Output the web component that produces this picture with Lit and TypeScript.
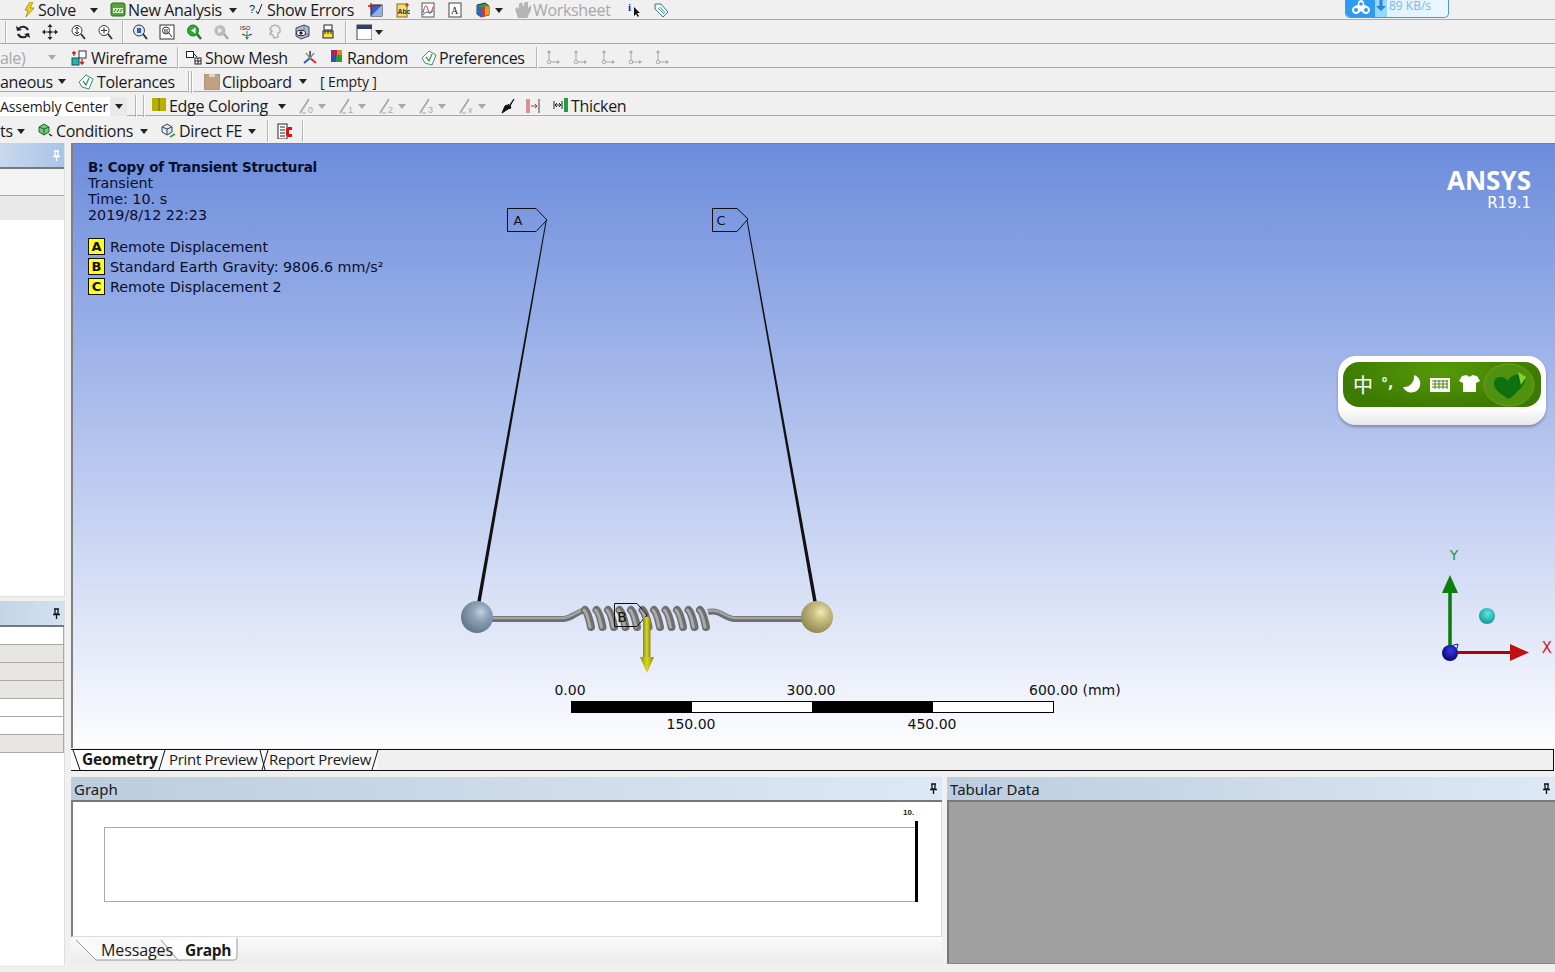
import { LitElement, html, css, svg } from "lit";
import { customElement } from "lit/decorators.js";

type Item = { x: number; icon?: string; text?: string; gray?: boolean; arrow?: boolean; sep?: boolean; small?: boolean; white?: boolean; btn?: boolean };

const G = "#a8a8a8";
const edgeIcon = (d: string) => svg`<path d="M1 15 10 1" stroke="${G}" stroke-width="1.800"/><path d="M3 15h4" stroke="${G}"/><text x="9" y="15" font-size="9" font-family="Liberation Sans" fill="${G}">${d}</text>`;
const icons: Record<string, unknown> = {
  bolt: svg`<path d="M8 0 3 8h3L4 15l8-9H8l3-6z" fill="#f4d50c" stroke="#8a7a10" stroke-width=".7"/>`,
  calc: svg`<rect x="1" y="1" width="14" height="13" rx="2" fill="#55a63a" stroke="#2b6a1c"/><rect x="3" y="6" width="10" height="5" fill="#d8efc8"/><path d="M4 10l2-3M7 10l2-3M10 10l2-3" stroke="#2b6a1c"/>`,
  err: svg`<text x="0" y="11" font-size="11" font-family="Liberation Sans" fill="#222">?</text><path d="M7 9l2 3 4-10" stroke="#222" fill="none"/>`,
  flag: svg`<rect x="4" y="3" width="11" height="11" fill="#3a5fc0" stroke="#222"/><path d="M4 14 15 3v11z" fill="#8fb0ee"/><path d="M1 4h6M4 1v6" stroke="#c02020" stroke-width="1.400"/>`,
  abc: svg`<rect x="3" y="2" width="10" height="13" fill="#f3d977" stroke="#8a6a10"/><text x="3.500" y="12" font-size="7" font-family="Liberation Sans" font-weight="700" fill="#333">Abc</text><path d="M11 3h4M13 1v4" stroke="#c02020"/>`,
  graph: svg`<rect x="2" y="1" width="12" height="14" fill="#fff" stroke="#555"/><path d="M3 11C5 1 7 3 8 8s3 5 5-3" stroke="#d03030" fill="none"/><path d="M3 13C6 8 9 12 13 9" stroke="#3050c0" fill="none"/>`,
  texta: svg`<rect x="2" y="1" width="12" height="14" fill="#fff" stroke="#444"/><text x="4" y="12" font-size="10" font-family="Liberation Serif" fill="#222">A</text>`,
  cube: svg`<path d="M2 3l8-2 4 3v9l-8 2-4-3z" fill="#2b9a4a" stroke="#333"/><path d="M6 5l8-1v9l-8 2z" fill="#e0a020"/><path d="M6 5v10l4-1V4.500z" fill="#d03838"/><path d="M2 3v9l4 3V5z" fill="#1f6ec8"/>`,
  hand: svg`<path d="M3 16 0 7l3-2 1 2V2l3-2 1 5 2-5h3l0 6 3-3v5l-3 6-1 4z" fill="#b4b4b4"/>`,
  info: svg`<text x="1" y="9" font-size="11" font-weight="700" font-family="Liberation Serif" fill="#1a2ac0">i</text><path d="M7 5v9l2-2 2 3 1-1-2-3h3z" fill="#111"/>`,
  tag: svg`<path d="M2 2h6l7 8-5 5-8-8z" fill="#eef5f7" stroke="#477"/><path d="M5 6l6 6M7 5l5 6" stroke="#59a"/>`,
  rot: svg`<path d="M13 6A5.500 5.500 0 0 0 3.500 5M3 10a5.500 5.500 0 0 0 9.500 1" fill="none" stroke="#222" stroke-width="2"/><path d="M1 2l1 5 5-1zM15 14l-1-5-5 1z" fill="#222"/>`,
  pan: svg`<path d="M8 1v14M1 8h14" stroke="#222"/><path d="M8 0l-2.500 3h5zM8 16l-2.500-3h5zM0 8l3-2.500v5zM16 8l-3-2.500v5z" fill="#222"/><circle cx="8" cy="8" r="1.500" fill="#222"/>`,
  zoom: svg`<circle cx="7" cy="6.500" r="5" fill="#fff" stroke="#334"/><path d="M7 3v7M5 5l2-2 2 2M5 8l2 2 2-2" stroke="#334" fill="none"/><path d="M11 10l4 5" stroke="#334" stroke-width="2"/>`,
  zoomb: svg`<circle cx="7" cy="6.500" r="5" fill="#fff" stroke="#334"/><path d="M4 6.500h6M7 3.500v6" stroke="#334"/><path d="M11 10l4 5" stroke="#334" stroke-width="2"/>`,
  fit: svg`<circle cx="7" cy="6.500" r="5.500" fill="#dce6f2" stroke="#334"/><path d="M5 4h4v5H5z" fill="#3a5fb0"/><path d="M11 10l4 5" stroke="#334" stroke-width="2"/>`,
  zbox: svg`<rect x="1" y="1" width="14" height="14" fill="#fff" stroke="#333"/><circle cx="7" cy="6.500" r="3.500" fill="none" stroke="#333"/><path d="M5 6h4M5 8h4M10 9l3 4" stroke="#333"/>`,
  zprev: svg`<circle cx="7" cy="6.500" r="5.500" fill="#30a838" stroke="#1e7a26"/><path d="M9.500 3.500 5 6.500l4.500 3z" fill="#fff"/><path d="M11 10l4 5" stroke="#1e7a26" stroke-width="2.500"/>`,
  znext: svg`<circle cx="7" cy="6.500" r="5.500" fill="#bcbcbc"/><path d="M5 3.500l4.500 3-4.500 3z" fill="#eee"/><path d="M11 10l4 5" stroke="#a8a8a8" stroke-width="2.500"/>`,
  iso: svg`<text x="1" y="5.500" font-size="6" font-family="Liberation Sans" fill="#111">ISO</text><path d="M8 7v8M3 10l5 2 5-2" stroke="#2a8a3a" fill="none"/><path d="M3 10l3 0-1 2z" fill="#c03030"/><path d="M13 10l-3 0 1 2z" fill="#3050c0"/><path d="M8 16l-2-3h4z" fill="#2a9a3a"/>`,
  face: svg`<path d="M5 2c5-2 9 1 8 6l-2 1v4l-4 1-1-3-3-1 2-3-2-2z" fill="none" stroke="#b4b4b4" stroke-width="1.500"/><path d="M2 4l2 2-1 4" stroke="#b4b4b4" fill="none"/>`,
  eye: svg`<path d="M2 4l8-3 5 2v9l-8 3-5-3z" fill="#a9bdd0" stroke="#445"/><path d="M10 1v10l5-1" stroke="#445" fill="none" opacity=".5"/><ellipse cx="7" cy="9" rx="4.500" ry="2.700" fill="#fff" stroke="#223"/><circle cx="7" cy="9" r="1.700" fill="#223"/>`,
  ruler: svg`<rect x="4" y="1" width="8" height="5" fill="#fff" stroke="#222"/><rect x="3" y="7" width="10" height="7" fill="#f4dd40" stroke="#222"/><path d="M5 7v3M8 7v3M11 7v3" stroke="#222"/>`,
  win: svg`<rect x="1" y="1" width="15" height="15" fill="#fff" stroke="#444"/><rect x="1" y="1" width="15" height="4" fill="#2f3f6a"/>`,
  wire: svg`<rect x="1" y="8" width="7" height="7" fill="#26b2b2" stroke="#155"/><rect x="8" y="1" width="7" height="7" fill="#fff" stroke="#333"/><path d="M3 1v5M1 3h4" stroke="#c02020" stroke-width="1.300"/><path d="M11 9v5M9 12l2 2 2-2" stroke="#c02020" fill="none" stroke-width="1.300"/>`,
  mesh: svg`<rect x=".5" y="1.500" width="7" height="6" fill="#fff" stroke="#222"/><rect x="9" y="8" width="6" height="6" fill="#fff" stroke="#222"/><path d="M9 11h6M12 8v6M8 4l3 3" stroke="#222"/>`,
  triad: svg`<path d="M8 8V1" stroke="#c03a8a" stroke-width="2"/><path d="M8 8 2 13" stroke="#2a5ac0" stroke-width="2"/><path d="M8 8l6 5" stroke="#d03030" stroke-width="2"/><path d="M8 8 4 3M8 8l4-5" stroke="#2a9a3a" stroke-width="1.200"/><circle cx="8" cy="8" r="1.500" fill="#889"/>`,
  random: svg`<rect x="1" y="0" width="6" height="6" fill="#b02060"/><rect x="7" y="0" width="5" height="5" fill="#d88a10"/><rect x="1" y="6" width="5" height="6" fill="#3050b0"/><rect x="6" y="5" width="6" height="7" fill="#2a9a3a"/>`,
  pref: svg`<path d="M1 8l7-7 7 4-4 10-7-2z" fill="#fff" stroke="#3a8a8a"/><path d="M5 7l3 4 3-7" fill="none" stroke="#3aa03a" stroke-width="1.300"/>`,
  axis: svg`<path d="M4 1v11h9" stroke="${G}" fill="none"/><path d="M4 0 2 3h4zM15 12l-3-2v4z" fill="${G}"/><circle cx="4" cy="12" r="1.800" fill="#f0f0f0" stroke="${G}"/>`,
  clip: svg`<rect x="0" y="0" width="16" height="16" fill="#bfa183" stroke="#a58a70"/><rect x="5" y="0" width="6" height="3" fill="#e0d6c8"/>`,
  edge: svg`<rect x="0" y="0" width="14" height="13" fill="#b6b000"/><path d="M7 0v13" stroke="#7a7600" stroke-width="1.300"/>`,
  e0: edgeIcon("0"), e1: edgeIcon("1"), e2: edgeIcon("2"), e3: edgeIcon("3"), ex: edgeIcon("x"),
  pin2: svg`<path d="M15 1l-4 7 1 2-3 1-6 4 3-7 2-1 2 1z" fill="#111" stroke="#111"/><path d="M9 6l3 3" stroke="#111"/>`,
  gap: svg`<path d="M2 1v14M4 1v14" stroke="#c03030"/><path d="M14 1v14" stroke="#444"/><path d="M6 8h6M10 6l2 2-2 2" stroke="#c03030" fill="none"/>`,
  thick: svg`<rect x="11" y="0" width="4" height="14" fill="#20a040"/><path d="M1 3v8M9 3v8M2 7h6M2 7l2-2M2 7l2 2M8 7 6 5M8 7 6 9" stroke="#222" fill="none"/>`,
  cond: svg`<path d="M2 4l5-3 5 3v5l-5 3-5-3z" fill="#6ecb6e" stroke="#264"/><path d="M7 6v6M2 4l5 2 5-2" stroke="#264" fill="none"/><path d="M12 11l3 2" stroke="#222" stroke-width="1.500"/>`,
  fe: svg`<path d="M2 4l5-3 5 3v5l-5 3-5-3z" fill="#dfe8f0" stroke="#345"/><path d="M7 6v6M2 4l5 2 5-2" stroke="#345" fill="none"/><path d="M10 14l5-3" stroke="#4a8a4a" stroke-width="1.500"/>`,
  cred: svg`<rect x="1" y="1" width="9" height="15" fill="#fff" stroke="#222"/><path d="M3 4h5M3 7h5M3 10h5M3 13h5" stroke="#222"/><path d="M15 4h-4l-2 2v6l2 2h4v-3h-3V7h3z" fill="#e01010"/>`,
};

const ic = (n: string) => html`<svg class="ic" viewBox="0 0 16 16">${icons[n]}</svg>`;

const rows: { cls: string; items: Item[] }[] = [
  { cls: "r1", items: [
    { x: 22, icon: "bolt" }, { x: 38, text: "Solve" }, { x: 90, arrow: true }, { x: 110, icon: "calc" }, { x: 128, text: "New Analysis" }, { x: 229, arrow: true },
    { x: 249, icon: "err" }, { x: 267, text: "Show Errors" }, { x: 367, icon: "flag" }, { x: 394, icon: "abc" }, { x: 420, icon: "graph" }, { x: 447, icon: "texta" },
    { x: 475, icon: "cube" }, { x: 495, arrow: true }, { x: 515, icon: "hand" }, { x: 533, text: "Worksheet", gray: true }, { x: 627, icon: "info" }, { x: 653, icon: "tag" },
  ] },
  { cls: "r2", items: [
    { x: 5, sep: true }, { x: 15, icon: "rot" }, { x: 42, icon: "pan" }, { x: 70, icon: "zoom" }, { x: 97, icon: "zoomb" }, { x: 122, sep: true }, { x: 132, icon: "fit" }, { x: 159, icon: "zbox" },
    { x: 186, icon: "zprev" }, { x: 213, icon: "znext" }, { x: 239, icon: "iso" }, { x: 267, icon: "face" }, { x: 294, icon: "eye" }, { x: 320, icon: "ruler" }, { x: 345, sep: true },
    { x: 356, icon: "win" }, { x: 375, arrow: true },
  ] },
  { cls: "r3", items: [
    { x: 0, text: "ale)", gray: true }, { x: 48, arrow: true, gray: true }, { x: 71, icon: "wire" }, { x: 91, text: "Wireframe" }, { x: 177, sep: true }, { x: 186, icon: "mesh" }, { x: 205, text: "Show Mesh" },
    { x: 302, icon: "triad" }, { x: 330, icon: "random" }, { x: 347, text: "Random" }, { x: 421, icon: "pref" }, { x: 439, text: "Preferences" }, { x: 536, sep: true },
    { x: 545, icon: "axis" }, { x: 572, icon: "axis" }, { x: 600, icon: "axis" }, { x: 627, icon: "axis" }, { x: 654, icon: "axis" },
  ] },
  { cls: "r4", items: [
    { x: 0, text: "aneous" }, { x: 58, arrow: true }, { x: 78, icon: "pref" }, { x: 97, text: "Tolerances" }, { x: 188, sep: true }, { x: 191, sep: true }, { x: 204, icon: "clip" }, { x: 222, text: "Clipboard" }, { x: 299, arrow: true }, { x: 320, text: "[ Empty ]", small: true },
  ] },
  { cls: "r5", items: [
    { x: 0, text: "Assembly Center", small: true, white: true }, { x: 110, arrow: true, btn: true }, { x: 127 }, { x: 135, sep: true }, { x: 143, sep: true }, { x: 152, icon: "edge" }, { x: 169, text: "Edge Coloring" }, { x: 278, arrow: true },
    { x: 299, icon: "e0" }, { x: 318, arrow: true, gray: true }, { x: 339, icon: "e1" }, { x: 358, arrow: true, gray: true }, { x: 379, icon: "e2" }, { x: 398, arrow: true, gray: true },
    { x: 419, icon: "e3" }, { x: 438, arrow: true, gray: true }, { x: 459, icon: "ex" }, { x: 478, arrow: true, gray: true }, { x: 499, icon: "pin2" }, { x: 525, icon: "gap" }, { x: 553, icon: "thick" }, { x: 571, text: "Thicken" },
  ] },
  { cls: "r6", items: [
    { x: 0, text: "ts" }, { x: 17, arrow: true }, { x: 37, icon: "cond" }, { x: 56, text: "Conditions" }, { x: 140, arrow: true }, { x: 160, icon: "fe" }, { x: 179, text: "Direct FE" }, { x: 248, arrow: true }, { x: 267, sep: true }, { x: 277, icon: "cred" }, { x: 302, sep: true },
  ] },
];

const pin = (c: string) => html`<svg class="pin" viewBox="0 0 9 11"><path d="M2 1h5M3 1v5h3V1M1 6.500h7M4.500 7v4" stroke="${c}" fill="none" stroke-width="1.300"/></svg>`;

@customElement("app-root")
export class AppRoot extends LitElement {
  static styles = css`
    :host { display: block; position: relative; width: 1555px; height: 972px; overflow: hidden; background: #f0f0f0; font-family: "Open Sans", "Noto Sans", sans-serif; color: #1a1a1a; }
    .bar { display: flex; align-items: center; box-sizing: border-box; border-bottom: 1px solid #a9a9a9; background: #f0f0f0; font-size: 16px; }
    .r1 { height: 20px; padding-top: 1px; }
    .r2 { height: 24px; padding-top: 1px; }
    .r3 { height: 24px; padding-top: 4px; }
    .r4 { height: 24px; padding-top: 4px; }
    .r5 { height: 24px; padding-top: 5px; }
    .r6 { height: 26px; padding-top: 4px; border-bottom: 0; }
    .it { flex: none; display: flex; align-items: center; white-space: nowrap; height: 19px; }
    .it.white { background: #fff; }
    .it.btn { background: #e9e9e9; justify-content: center; }
    .txt { letter-spacing: -0.32px; }
    .gray { color: #a8a8a8; }
    .small { font-size: 14px; letter-spacing: -0.1px; }
    .ic { width: 16px; height: 16px; flex: none; }
    .arr { width: 0; height: 0; border-left: 4.500px solid transparent; border-right: 4.500px solid transparent; border-top: 5px solid #222; }
    .arr.gray { border-top-color: #a8a8a8; }
    .sp { width: 1px; height: 22px; background: #b4b4b4; box-shadow: 1px 0 0 #fff; }
    .main { display: grid; grid-template-columns: 65px 1fr; column-gap: 6px; height: 830px; padding-top: 1px; box-sizing: border-box; }
    .left { display: flex; flex-direction: column; gap: 4px; }
    .lp { display: flex; flex-direction: column; background: #fff; border-right: 1px solid #dedede; box-sizing: border-box; }
    .lp1 { height: 454px; border-bottom: 1px solid #dedede; }
    .lp2 { height: 364px; }
    .lh { height: 26px; flex: none; display: flex; align-items: center; justify-content: flex-end; padding-right: 3px; box-sizing: border-box; }
    .lh1 { background: linear-gradient(90deg, #c8d9ee, #a9c4e6); border-bottom: 2px solid #777; }
    .lh2 { background: linear-gradient(90deg, #c2d4e6, #d3e2f1); border-bottom: 2px solid #777; }
    .pin { width: 9px; height: 11px; }
    .lr { height: 18px; box-sizing: border-box; border-bottom: 1px solid #aaa; border-right: 1px solid #aaa; background: #fff; }
    .lr.g { background: #e8e6e3; }
    .lt { height: 27px; box-sizing: border-box; border-bottom: 1px solid #aaa; background: #f3f3f3; }
    .lt2 { height: 24px; background: #e9e9e9; border-bottom: 0; }
    .right { display: flex; flex-direction: column; min-width: 0; }
    .vp { position: relative; height: 605px; flex: none; box-sizing: border-box; border-left: 2px solid #808080; border-top: 1px solid #808080; background: linear-gradient(180deg, #6c8cdc 0%, #fdfdff 100%); overflow: hidden; }
    .vp svg.geo { position: absolute; left: -2px; top: -1px; width: 1484px; height: 605px; }
    .info { position: absolute; left: 15px; top: 15px; display: flex; flex-direction: column; font: 14.300px/16px "DejaVu Sans", sans-serif; color: #0a0f2a; white-space: nowrap; }
    .info b { letter-spacing: -0.2px; font-size: 13.500px; }
    .leg { display: flex; flex-direction: column; gap: 3px; margin-top: 15px; }
    .lg { display: flex; align-items: center; gap: 5px; height: 17px; }
    .bd { width: 15px; height: 15px; background: #ffff20; border: 1px solid #111; display: flex; align-items: center; justify-content: center; font-weight: 700; font-size: 13px; color: #111; }
    .tabs { position: relative; height: 22px; flex: none; display: flex; box-sizing: border-box; border: 1px solid #111; border-left: 0; margin-right: 1px; margin-top: 1px; background: #f0f0f0; font-size: 15px; line-height: 19px; }
    .tabs span { flex: none; white-space: nowrap; letter-spacing: -0.3px; }
    .tabs .t1 { width: 90px; padding-left: 11px; box-sizing: border-box; background: #fff; font-weight: 700; font-size: 15.500px; letter-spacing: -0.15px; }
    .t2 { width: 103px; padding-left: 8px; box-sizing: border-box; background: #f8f8f8; }
    .t3 { width: 114px; padding-left: 5px; box-sizing: border-box; background: #f8f8f8; }
    .tabs svg { position: absolute; left: 0; top: -1px; width: 320px; height: 22px; }
    .low { display: flex; gap: 5px; margin-top: 6px; height: 187px; }
    .gp { width: 871px; flex: none; display: flex; flex-direction: column; }
    .tp { flex: 1; display: flex; flex-direction: column; }
    .ph { height: 25px; flex: none; box-sizing: border-box; border-bottom: 2px solid #777; display: flex; align-items: center; justify-content: space-between; padding: 0 4px 0 3px; background: linear-gradient(90deg, #bccdde, #dce8f5); font: 15px "Noto Sans", sans-serif; }
    .gb { position: relative; height: 135px; flex: none; background: #fff; border-left: 2px solid #808080; border-right: 1px solid #ddd; border-bottom: 1px solid #ddd; box-sizing: border-box; }
    .plot { position: absolute; left: 31px; top: 25px; width: 812px; height: 75px; box-sizing: border-box; border: 1px solid #aaa; border-right: 0; }
    .mark { position: absolute; left: 842px; top: 19px; width: 3px; height: 81px; background: #000; }
    .ten { position: absolute; left: 830px; top: 6px; font: 700 8px "Liberation Sans", sans-serif; }
    .gt { position: relative; flex: 1; background: linear-gradient(180deg, #fafafa, #ececec); font-size: 16px; }
    .gt svg { position: absolute; left: 0; top: 0; width: 180px; height: 27px; }
    .gt .msg { position: absolute; left: 30px; top: 1px; letter-spacing: -0.1px; line-height: 24px; }
    .gt .grf { position: absolute; left: 114px; top: 1px; font-weight: 700; font-size: 15.500px; line-height: 24px; letter-spacing: -0.3px; }
    .tb { flex: 1; background: #a0a0a0; border-left: 2px solid #777; border-bottom: 1px solid #888; }
    .status { display: flex; gap: 2px; height: 8px; box-sizing: border-box; padding-top: 3px; margin-top: -3px; background: #f0f0f0; }
    .status i { flex: none; border-top: 1px solid #bbb; border-right: 1px solid #bbb; }
    .c1 { width: 153px; } .c2 { width: 250px; } .c3 { width: 210px; } .c4 { width: 460px; } .status .c5 { flex: 1; border-right: 0; }
    .baidu { position: absolute; left: 1345px; top: 0; width: 104px; height: 18px; display: flex; border: 1px solid #4b98de; border-top: 0; border-radius: 0 0 5px 5px; box-sizing: border-box; overflow: hidden; background: linear-gradient(90deg, #d8effe, #eaf7ff); font: 12px "Open Sans", sans-serif; color: #7db6e8; line-height: 11px; }
    .baidu svg { flex: none; }
    .bl { width: 29px; background: #2f9bf0; display: flex; justify-content: center; flex: none; }
    .bm { width: 12px; background: #93d9fb; display: flex; justify-content: center; flex: none; margin-right: 2px; }
    .ime { position: absolute; left: 1338px; top: 356px; width: 208px; height: 69px; box-sizing: border-box; padding: 6px 5px; border-radius: 18px; background: linear-gradient(180deg, #fff 75%, #e8e8ea 100%); box-shadow: 0 2px 3px rgba(70, 70, 90, 0.45); }
    .pill { position: relative; height: 45px; border-radius: 16px; background: radial-gradient(ellipse at 50% 20%, #559a08, #3c7a00 75%); display: flex; align-items: center; padding-left: 10px; color: #fff; font: 400 20px "Noto Sans CJK SC", sans-serif; }
    .pill svg { position: absolute; left: 0; top: 0; width: 198px; height: 45px; }
  `;

  private row(r: { cls: string; items: Item[] }) {
    return html`<div class="bar ${r.cls}" style="padding-left:${r.items[0].x}px">
      ${r.items.map((it, i) => {
        const next = r.items[i + 1];
        const w = next ? next.x - it.x : 120;
        return html`<span class="it ${it.white ? "white" : ""} ${it.btn ? "btn" : ""}" style="width:${w}px">
          ${it.icon ? ic(it.icon) : ""}
          ${it.text ? html`<span class="txt ${it.gray ? "gray" : ""} ${it.small ? "small" : ""}">${it.text}</span>` : ""}
          ${it.arrow ? html`<span class="arr ${it.gray ? "gray" : ""}"></span>` : ""}
          ${it.sep ? html`<span class="sp"></span>` : ""}
        </span>`;
      })}
    </div>`;
  }

  private geometry() {
    const coils = Array.from({ length: 11 }, (_, i) => 585 + i * 11.5);
    const tx = (x: number, y: number, t: string, a = "middle", s = 14, f = "#111") =>
      svg`<text x="${x}" y="${y}" text-anchor="${a}" font-size="${s}" font-family="DejaVu Sans" fill="${f}">${t}</text>`;
    return html`<svg class="geo" viewBox="71 143 1484 605">
      <defs>
        <radialGradient id="bb" cx=".62" cy=".35" r=".7"><stop offset="0" stop-color="#c4d3df"/><stop offset=".35" stop-color="#8fa5b9"/><stop offset="1" stop-color="#5f7486"/></radialGradient>
        <radialGradient id="bk" cx=".62" cy=".35" r=".7"><stop offset="0" stop-color="#f0ebb8"/><stop offset=".35" stop-color="#c9bf80"/><stop offset="1" stop-color="#8f8650"/></radialGradient>
        <radialGradient id="bn" cx=".55" cy=".35" r=".7"><stop offset="0" stop-color="#3a3ae0"/><stop offset="1" stop-color="#000070"/></radialGradient>
        <radialGradient id="bc" cx=".55" cy=".35" r=".7"><stop offset="0" stop-color="#5de8e8"/><stop offset="1" stop-color="#109090"/></radialGradient>
        <linearGradient id="yl" x1="0" x2="1" y1="0" y2="0"><stop offset="0" stop-color="#8a8a10"/><stop offset=".5" stop-color="#d8d820"/><stop offset="1" stop-color="#8a8a10"/></linearGradient>
      </defs>
      <polygon points="545.800,220 546.800,220 480.500,603 477,603" fill="#111"/>
      <polygon points="746.500,220 747.500,220 817,603 813.500,603" fill="#111"/>
      <polygon points="507.500,208.500 536,208.500 547,220 536,231.500 507.500,231.500" fill="none" stroke="#111" stroke-width="1"/>
      <polygon points="712.500,208.500 737,208.500 748,219 737,231.500 712.500,231.500" fill="none" stroke="#111" stroke-width="1"/>
      ${tx(518, 225, "A", "middle", 13)}${tx(721, 225, "C", "middle", 13)}
      <path d="M490 619H563C570 619 575 613 585 610" fill="none" stroke="#6e6e6e" stroke-width="6"/>
      <path d="M490 618H563C570 618 575 612 585 609" fill="none" stroke="#a4a4a4" stroke-width="2.500"/>
      <path d="M708 612C720 609 725 619 735 619H803" fill="none" stroke="#6e6e6e" stroke-width="6"/>
      <path d="M708 611C720 608 725 618 735 618H803" fill="none" stroke="#a4a4a4" stroke-width="2.500"/>
      ${coils.map((x) => svg`<path d="M${x} 610C${x + 3} 613 ${x + 5} 622 ${x + 6} 627" fill="none" stroke="#6f6f6f" stroke-width="8" stroke-linecap="round"/><path d="M${x - 1} 610C${x + 2} 613 ${x + 4} 622 ${x + 5} 627" fill="none" stroke="#aaaaaa" stroke-width="3" stroke-linecap="round"/>`)}
      <circle cx="477" cy="617" r="16" fill="url(#bb)"/>
      <circle cx="817" cy="617" r="16" fill="url(#bk)"/>
      <polygon points="614.500,603.500 637,603.500 647,615 637,626.500 614.500,626.500" fill="none" stroke="#111"/>
      ${tx(622, 622, "B", "middle", 14)}
      <rect x="643" y="617" width="7.500" height="40" fill="url(#yl)"/>
      <polygon points="640,657 654,657 647,673" fill="url(#yl)"/>
      <rect x="571.500" y="701.500" width="482" height="11" fill="#fff" stroke="#000"/>
      <rect x="571" y="701" width="121" height="12" fill="#000"/><rect x="812" y="701" width="121" height="12" fill="#000"/>
      ${tx(570, 695, "0.00")}${tx(811, 695, "300.00")}${tx(1029, 695, "600.00 (mm)", "start")}${tx(691, 729, "150.00")}${tx(932, 729, "450.00")}
      <text x="1447" y="190" font-size="26" font-weight="700" font-family="Open Sans" fill="#fff" textLength="84">ANSYS</text>
      <text x="1531" y="208" text-anchor="end" font-size="15" font-family="DejaVu Sans" fill="#fff">R19.1</text>
      <path d="M1450 652V590" stroke="#0a7a0a" stroke-width="3.500"/><polygon points="1442,593 1458,593 1450,575" fill="#0a800a"/>
      <path d="M1450 652.500H1512" stroke="#b00000" stroke-width="3"/><polygon points="1510,644 1529,652.500 1510,661" fill="#c01010"/>
      <path d="M1450 646l8-2-2 8" fill="none" stroke="#1a1ab0"/>
      <circle cx="1450" cy="653" r="8" fill="url(#bn)"/>
      <circle cx="1487" cy="616" r="8" fill="url(#bc)"/>
      ${tx(1454, 560, "Y", "middle", 14, "#1a9a3a")}${tx(1547, 653, "X", "middle", 15, "#d82020")}
    </svg>`;
  }

  render() {
    return html`
      ${rows.map((r) => this.row(r))}
      <div class="main">
        <div class="left">
          <div class="lp lp1">
            <div class="lh lh1">${pin("#fff")}</div>
            <div class="lt"></div><div class="lt lt2"></div>
          </div>
          <div class="lp lp2">
            <div class="lh lh2">${pin("#111")}</div>
            ${[0, 1, 1, 1, 0, 0, 1].map((g) => html`<div class="lr ${g ? "g" : ""}"></div>`)}
          </div>
        </div>
        <div class="right">
          <div class="vp">
            ${this.geometry()}
            <div class="info">
              <b>B: Copy of Transient Structural</b>
              <span>Transient</span>
              <span>Time: 10. s</span>
              <span>2019/8/12 22:23</span>
              <div class="leg">
                <div class="lg"><span class="bd">A</span>Remote Displacement</div>
                <div class="lg"><span class="bd">B</span>Standard Earth Gravity: 9806.6 mm/s²</div>
                <div class="lg"><span class="bd">C</span>Remote Displacement 2</div>
              </div>
            </div>
          </div>
          <div class="tabs">
            <span class="t1">Geometry</span><span class="t2">Print Preview</span><span class="t3">Report Preview</span>
            <svg viewBox="0 0 320 22"><path d="M2 1l7 20M88 21l6-20M189 1l5 20M191 21l6-20M301 21l6-20" fill="none" stroke="#111"/></svg>
          </div>
          <div class="low">
            <div class="gp">
              <div class="ph">Graph ${pin("#111")}</div>
              <div class="gb"><div class="plot"></div><div class="mark"></div><div class="ten">10.</div></div>
              <div class="gt">
                <svg viewBox="0 0 180 27"><path d="M5 3l20 20h85" fill="#fafafa" stroke="#999"/><path d="M90 3l17 20h57l2-2V1" fill="#fff" stroke="#999"/></svg>
                <span class="msg">Messages</span><span class="grf">Graph</span>
              </div>
            </div>
            <div class="tp">
              <div class="ph">Tabular Data ${pin("#111")}</div>
              <div class="tb"></div>
            </div>
          </div>
        </div>
      </div>
      <div class="status"><i class="c1"></i><i class="c2"></i><i class="c3"></i><i class="c4"></i><i class="c5"></i></div>
      <div class="baidu">
        <div class="bl"><svg width="22" height="17" viewBox="0 2 22 17"><path d="M11 2c-2 0-3 2-3 3 0 2-1 2-3 3S2 10 2 12c0 2 2 4 4 4s3-1 5-3c2 2 3 3 5 3s4-2 4-4-1-3-3-4-3-1-3-3c0-1-1-3-3-3z" fill="#fff"/><circle cx="6" cy="12" r="2" fill="#2f9bf0"/><circle cx="16" cy="12" r="2" fill="#2f9bf0"/><circle cx="11" cy="6" r="1.800" fill="#2f9bf0"/></svg></div>
        <div class="bm"><svg width="10" height="12" viewBox="0 0 10 12"><path d="M3.500 0h3v6H10L5 11 0 6h3.500z" fill="#2f7fd8"/></svg></div>
        <span>89 KB/s</span>
      </div>
      <div class="ime">
        <div class="pill">
          <span>中</span>
          <svg viewBox="0 0 198 45">
            <text x="38" y="26" font-size="14" font-family="DejaVu Sans" font-weight="700" fill="#fff">°,</text>
            <path transform="translate(7 0)" d="M64 13a9 9 0 1 1-11 12c6 1 12-5 11-12z" fill="#fff"/>
            <rect x="87" y="16" width="20" height="14" fill="#fff"/>
            <path d="M89 19h16M89 22h16M89 25h16M92 18v9M96 18v9M100 18v9M104 18v9" stroke="#3c7a00" stroke-width=".9"/>
            <path d="M119 14l5-1c1 2 4 2 5 0l5 1 3 5-4 2v9h-13v-9l-4-2z" fill="#fff"/>
            <ellipse cx="166" cy="23" rx="25" ry="21" fill="#4f9210" stroke="#7a9a28"/>
            <path d="M166 37c-9-5-16-10-15-17 1-6 10-7 14-1 2-6 12-9 16-4 3 5-2 9-4 12-4 4-7 7-11 10z" fill="#0f7010"/>
            <path d="M175 10l8 5-5 8z" fill="#8ad030"/>
          </svg>
        </div>
      </div>
    `;
  }
}
